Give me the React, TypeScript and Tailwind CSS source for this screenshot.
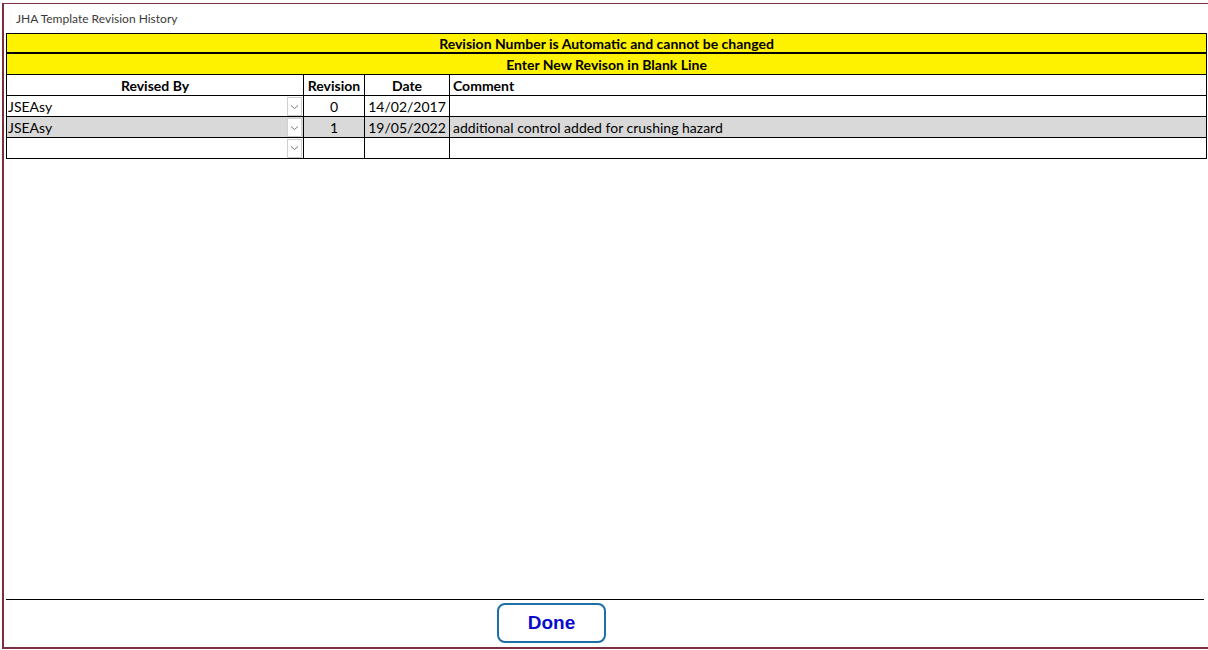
import React from "react";

const font = { fontFamily: "Lato, 'Liberation Sans', sans-serif" };

function Chevron() {
  return (
    <div className="flex h-[19px] w-[15px] items-center justify-center border border-[#cfcfcf] bg-white">
      <svg width="9" height="6" viewBox="0 0 9 6" fill="none">
        <path d="M1 1.5 L4.5 4.5 L8 1.5" stroke="#7a7a7a" strokeWidth="1" />
      </svg>
    </div>
  );
}

type Row = { by: string; rev: string; date: string; comment: string; gray?: boolean };

const rows: Row[] = [
  { by: "JSEAsy", rev: "0", date: "14/02/2017", comment: "" },
  { by: "JSEAsy", rev: "1", date: "19/05/2022", comment: "additional control added for crushing hazard", gray: true },
  { by: "", rev: "", date: "", comment: "" },
];

export default function App() {
  return (
    <div className="h-[650px] w-[1208px] overflow-hidden bg-white pl-[2px] pt-[3px]" style={font}>
      <div className="flex h-[646px] flex-col border-b-[2px] border-l-[2px] border-t border-[#7d2e40]">
        <div className="flex h-[29px] items-center pl-[12px] text-[12px] text-[#3a3a3a]">
          JHA Template Revision History
        </div>
        <div className="ml-[2px] mr-[1px] border-x border-t border-black text-[14px] text-black">
          <div className="flex h-[20px] items-center justify-center border-b-2 border-black bg-[#fff200] font-bold">
            Revision Number is Automatic and cannot be changed
          </div>
          <div className="flex h-[21px] items-center justify-center border-b border-black bg-[#fff200] font-bold">
            Enter New Revison in Blank Line
          </div>
          <div className="grid h-[21px] grid-cols-[297px_61px_85px_1fr] border-b border-black font-bold">
            <div className="flex items-center justify-center border-r border-black">Revised By</div>
            <div className="flex items-center justify-center border-r border-black">Revision</div>
            <div className="flex items-center justify-center border-r border-black">Date</div>
            <div className="flex items-center pl-[3px]">Comment</div>
          </div>
          {rows.map((r, i) => (
            <div
              key={i}
              className={`grid h-[21px] grid-cols-[297px_61px_85px_1fr] border-b border-black ${r.gray ? "bg-[#d9d9d9]" : "bg-white"}`}
            >
              <div className="flex items-center justify-between border-r border-black pl-[1px] pr-[1px]">
                <span>{r.by}</span>
                <Chevron />
              </div>
              <div className="flex items-center justify-center border-r border-black">{r.rev}</div>
              <div className="flex items-center justify-center border-r border-black">{r.date}</div>
              <div className="flex items-center pl-[3px]">{r.comment}</div>
            </div>
          ))}
        </div>
        <div className="flex-1" />
        <div className="ml-[2px] mr-[4px] border-t-[1.5px] border-black" />
        <div className="flex h-[47px] items-start pt-[3px]">
          <div className="ml-[493px] flex h-[40px] w-[109px] items-center justify-center rounded-[8px] border-[2.5px] border-[#1e6fa6] bg-white">
            <span
              className="text-[19px] font-bold text-[#0a0acc]"
              style={{ fontFamily: "'Liberation Sans', Arial, sans-serif" }}
            >
              Done
            </span>
          </div>
        </div>
      </div>
    </div>
  );
}
